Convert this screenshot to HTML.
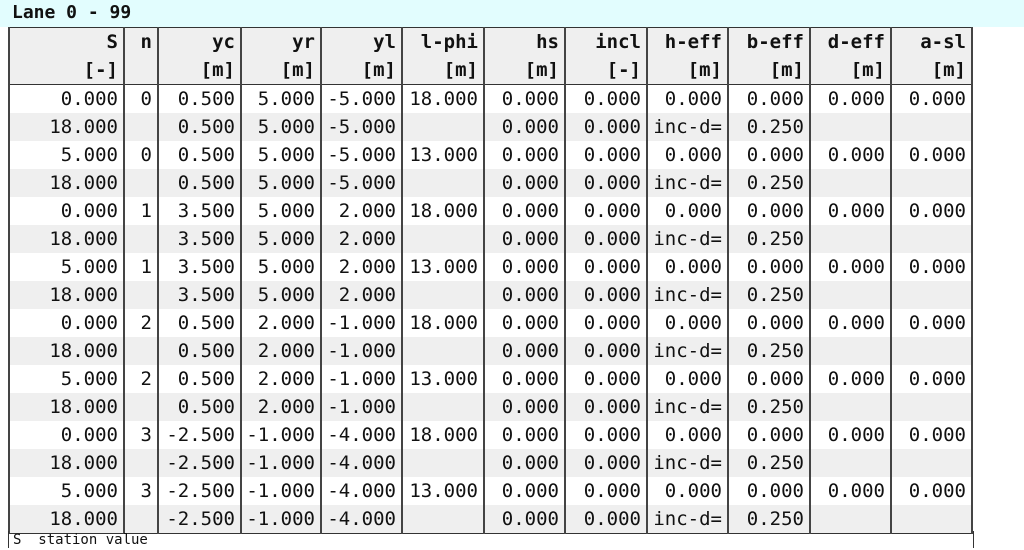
<!DOCTYPE html><html><head><style>
body{margin:0;width:1024px;height:548px;overflow:hidden;background:#fff;font-family:"DejaVu Sans Mono","Liberation Mono",monospace;color:#111}
.t{position:absolute;left:0;top:0;width:1024px;height:27px;background:#e2fdfe}
.t span{position:absolute;left:12px;top:2px;font-size:18px;font-weight:bold}
table{position:absolute;left:8px;top:27px;border-collapse:collapse;table-layout:fixed;font-size:19px}
td{height:28px;padding:0 5px 0 0;text-align:right;border-left:2px solid #444;border-right:2px solid #444;white-space:nowrap;overflow:hidden;line-height:28px}
thead td{background:#efefef;font-weight:bold}
thead tr:first-child td{border-top:1.5px solid #333}
thead tr:last-child td{border-bottom:1.5px solid #333}
tbody tr:nth-child(even) td{background:#efefef}
tbody tr:last-child td{border-bottom:1.5px solid #333}
.f{position:absolute;left:8px;top:531px;height:17px;border-left:1.5px solid #333;border-right:1.5px solid #333;width:960px;font-size:14px;padding-left:4px;line-height:19px}
</style></head><body>
<div class="t"><span>Lane 0 - 99</span></div>
<table>
<colgroup><col style="width:115px"><col style="width:34px"><col style="width:83px"><col style="width:80px"><col style="width:81px"><col style="width:82px"><col style="width:81px"><col style="width:82px"><col style="width:81px"><col style="width:82px"><col style="width:81px"><col style="width:81px"></colgroup>
<thead>
<tr><td>S</td><td>n</td><td>yc</td><td>yr</td><td>yl</td><td>l-phi</td><td>hs</td><td>incl</td><td>h-eff</td><td>b-eff</td><td>d-eff</td><td>a-sl</td></tr>
<tr><td>[-]</td><td></td><td>[m]</td><td>[m]</td><td>[m]</td><td>[m]</td><td>[m]</td><td>[-]</td><td>[m]</td><td>[m]</td><td>[m]</td><td>[m]</td></tr>
</thead>
<tbody>
<tr><td>0.000</td><td>0</td><td>0.500</td><td>5.000</td><td>-5.000</td><td>18.000</td><td>0.000</td><td>0.000</td><td>0.000</td><td>0.000</td><td>0.000</td><td>0.000</td></tr>
<tr><td>18.000</td><td></td><td>0.500</td><td>5.000</td><td>-5.000</td><td></td><td>0.000</td><td>0.000</td><td>inc-d=</td><td>0.250</td><td></td><td></td></tr>
<tr><td>5.000</td><td>0</td><td>0.500</td><td>5.000</td><td>-5.000</td><td>13.000</td><td>0.000</td><td>0.000</td><td>0.000</td><td>0.000</td><td>0.000</td><td>0.000</td></tr>
<tr><td>18.000</td><td></td><td>0.500</td><td>5.000</td><td>-5.000</td><td></td><td>0.000</td><td>0.000</td><td>inc-d=</td><td>0.250</td><td></td><td></td></tr>
<tr><td>0.000</td><td>1</td><td>3.500</td><td>5.000</td><td>2.000</td><td>18.000</td><td>0.000</td><td>0.000</td><td>0.000</td><td>0.000</td><td>0.000</td><td>0.000</td></tr>
<tr><td>18.000</td><td></td><td>3.500</td><td>5.000</td><td>2.000</td><td></td><td>0.000</td><td>0.000</td><td>inc-d=</td><td>0.250</td><td></td><td></td></tr>
<tr><td>5.000</td><td>1</td><td>3.500</td><td>5.000</td><td>2.000</td><td>13.000</td><td>0.000</td><td>0.000</td><td>0.000</td><td>0.000</td><td>0.000</td><td>0.000</td></tr>
<tr><td>18.000</td><td></td><td>3.500</td><td>5.000</td><td>2.000</td><td></td><td>0.000</td><td>0.000</td><td>inc-d=</td><td>0.250</td><td></td><td></td></tr>
<tr><td>0.000</td><td>2</td><td>0.500</td><td>2.000</td><td>-1.000</td><td>18.000</td><td>0.000</td><td>0.000</td><td>0.000</td><td>0.000</td><td>0.000</td><td>0.000</td></tr>
<tr><td>18.000</td><td></td><td>0.500</td><td>2.000</td><td>-1.000</td><td></td><td>0.000</td><td>0.000</td><td>inc-d=</td><td>0.250</td><td></td><td></td></tr>
<tr><td>5.000</td><td>2</td><td>0.500</td><td>2.000</td><td>-1.000</td><td>13.000</td><td>0.000</td><td>0.000</td><td>0.000</td><td>0.000</td><td>0.000</td><td>0.000</td></tr>
<tr><td>18.000</td><td></td><td>0.500</td><td>2.000</td><td>-1.000</td><td></td><td>0.000</td><td>0.000</td><td>inc-d=</td><td>0.250</td><td></td><td></td></tr>
<tr><td>0.000</td><td>3</td><td>-2.500</td><td>-1.000</td><td>-4.000</td><td>18.000</td><td>0.000</td><td>0.000</td><td>0.000</td><td>0.000</td><td>0.000</td><td>0.000</td></tr>
<tr><td>18.000</td><td></td><td>-2.500</td><td>-1.000</td><td>-4.000</td><td></td><td>0.000</td><td>0.000</td><td>inc-d=</td><td>0.250</td><td></td><td></td></tr>
<tr><td>5.000</td><td>3</td><td>-2.500</td><td>-1.000</td><td>-4.000</td><td>13.000</td><td>0.000</td><td>0.000</td><td>0.000</td><td>0.000</td><td>0.000</td><td>0.000</td></tr>
<tr><td>18.000</td><td></td><td>-2.500</td><td>-1.000</td><td>-4.000</td><td></td><td>0.000</td><td>0.000</td><td>inc-d=</td><td>0.250</td><td></td><td></td></tr>
</tbody></table>
<div class="f">S&nbsp;&nbsp;station value</div>
</body></html>
